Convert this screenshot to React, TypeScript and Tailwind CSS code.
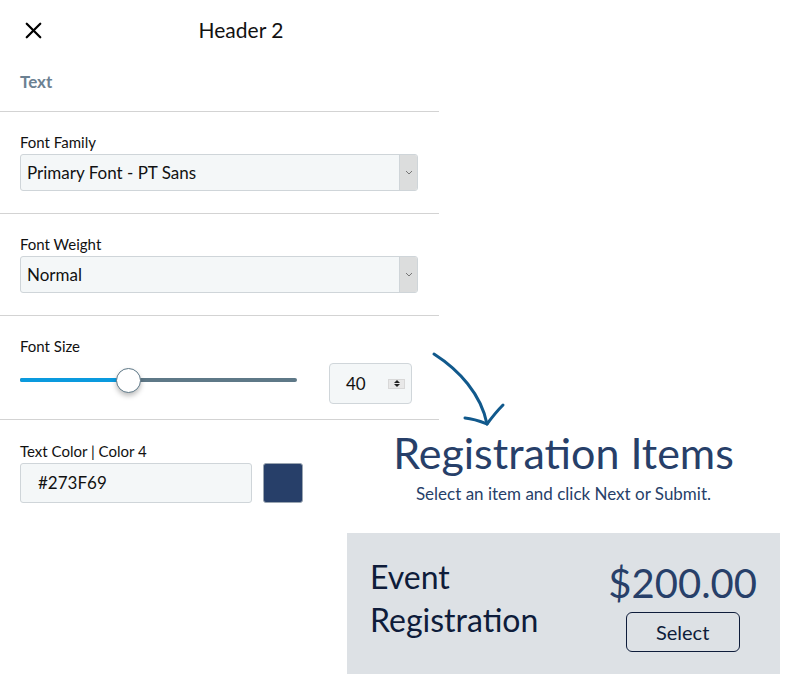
import { X } from 'lucide-react'

const lato = { fontFamily: 'Lato, "Open Sans", sans-serif' }

function SelectBox({ value }: { value: string }) {
  return (
    <div className="flex h-[37px] w-[398px] items-stretch overflow-hidden rounded-[3px] border border-[#cfd5d9] bg-[#f4f7f8]">
      <div className="flex flex-1 items-center pl-[6px] text-[17px] text-[#111]">{value}</div>
      <div className="flex w-[18px] items-center justify-center border-l border-[#cfd5d9] bg-[#dcdddd]">
        <svg width="8" height="5" viewBox="0 0 8 5" fill="none" stroke="#777" strokeWidth="1">
          <path d="M1 1l3 3 3-3" />
        </svg>
      </div>
    </div>
  )
}

function Section({ label, children }: { label: string; children: React.ReactNode }) {
  return (
    <div className="border-t border-[#d3d3d3] px-[20px] pb-[22px] pt-[21px]">
      <div className="mb-[3px] text-[15px] leading-[18px] text-[#111]">{label}</div>
      {children}
    </div>
  )
}

export default function App() {
  return (
    <div className="relative h-[691px] w-[792px] bg-white" style={lato}>
      <div className="w-[439px]">
        <div className="flex h-[60px] items-center pl-[20px]">
          <X className="h-[27px] w-[27px] text-black" strokeWidth={2} />
          <div className="flex-1 pr-[4px] text-center text-[21px] text-[#111]">Header 2</div>
        </div>
        <div className="px-[20px] pb-[18px] pt-[11px] text-[17px] font-bold leading-[22px] text-[#6c8192]">Text</div>

        <Section label="Font Family">
          <SelectBox value="Primary Font - PT Sans" />
        </Section>
        <Section label="Font Weight">
          <SelectBox value="Normal" />
        </Section>

        <div className="border-t border-[#d3d3d3] px-[20px] pb-[15px] pt-[21px]">
          <div className="text-[15px] leading-[18px] text-[#111]">Font Size</div>
          <div className="flex items-center">
            <div className="relative mt-[1px] h-[24px] w-[277px]">
              <div className="absolute left-0 right-0 top-[10px] h-[4px] rounded-full bg-[#5e7887]" />
              <div className="absolute left-0 top-[10px] h-[4px] w-[108px] rounded-full bg-[#0a9ade]" />
              <div className="absolute left-[96px] top-0 h-[25px] w-[25px] rounded-full border border-[#5e7887] bg-white shadow-[0_3px_5px_rgba(0,0,0,0.25)]" />
            </div>
            <div className="ml-[32px] mt-[8px] flex h-[41px] w-[83px] items-center justify-between rounded-[4px] border border-[#d0d6da] bg-[#f4f7f8] pl-[16px] pr-[6px]">
              <span className="text-[17px] text-[#111]">40</span>
              <div className="flex h-[10px] w-[17px] flex-col items-center justify-center gap-[1px] border border-[#d8d8d8] bg-[#e8e8e8]">
                <svg width="6" height="3" viewBox="0 0 6 3"><path d="M0 3L3 0L6 3Z" fill="#222" /></svg>
                <svg width="6" height="3" viewBox="0 0 6 3"><path d="M0 0L3 3L6 0Z" fill="#222" /></svg>
              </div>
            </div>
          </div>
        </div>

        <div className="border-t border-[#d3d3d3] px-[20px] pt-[22px]">
          <div className="mb-[3px] text-[15px] leading-[18px] text-[#111]">Text Color | Color 4</div>
          <div className="flex items-center gap-[11px]">
            <div className="flex h-[40px] w-[232px] items-center rounded-[3px] border border-[#cfd5d9] bg-[#f4f7f8] pl-[17px] text-[17px] text-[#111]">
              #273F69
            </div>
            <div className="h-[40px] w-[40px] rounded-[3px] border border-[#9aa5b1] bg-[#273F69]" />
          </div>
        </div>
      </div>

      {/* preview callout */}
      <div className="absolute left-[347px] top-[340px] w-[433px]" style={lato}>
        <svg width="433" height="88" viewBox="0 0 433 88" fill="none" stroke="#11598c" strokeWidth="3" strokeLinecap="round" strokeLinejoin="round" className="block">
          <path d="M87 14C112 30 134 54 140 84" />
          <path d="M118 78C128 79 135 82 140 84C146 76 151 70 156 65" />
        </svg>
        <div className="text-center text-[43px] leading-[50px] text-[#273F69]">Registration Items</div>
        <div className="mt-[5px] text-center text-[17px] leading-[22px] text-[#273F69]">Select an item and click Next or Submit.</div>
        <div className="mt-[28px] flex h-[141px] items-center justify-between bg-[#dde1e5] px-[23px]">
          <div className="pb-[12px] text-[32px] leading-[43px] text-[#0e1c3a]">
            Event<br />Registration
          </div>
          <div className="flex flex-col items-center pt-[4px]">
            <div className="text-[40px] leading-[48px] text-[#273F69]">$200.00</div>
            <button className="mt-[5px] h-[40px] w-[114px] rounded-[6px] border border-[#0e1c3a] text-[20px] text-[#0e1c3a]">
              Select
            </button>
          </div>
        </div>
      </div>
    </div>
  )
}
